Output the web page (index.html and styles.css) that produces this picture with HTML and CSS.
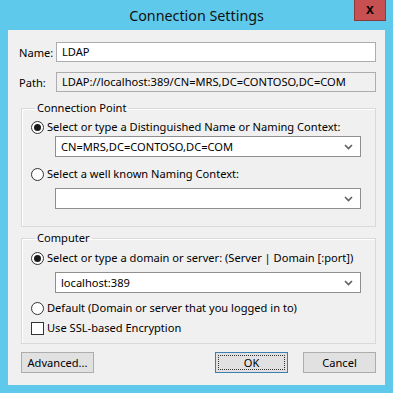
FILE: index.html
```html
<!DOCTYPE html>
<html lang="en">
<head>
  <meta charset="UTF-8">
  <title>Connection Settings</title>
  <link rel="stylesheet" href="styles.css">
</head>
<body>
  <div class="window">
    <div class="titlebar">
      <div class="title">Connection Settings</div>
      <div class="close-btn">x</div>
    </div>

    <div class="client">
      <div class="field-row">
        <label class="field-label">Name:</label>
        <div class="textbox">LDAP</div>
      </div>
      <div class="field-row path-row">
        <label class="field-label">Path:</label>
        <div class="textbox readonly">LDAP://localhost:389/CN=MRS,DC=CONTOSO,DC=COM</div>
      </div>

      <fieldset class="group first-group">
        <legend>Connection Point</legend>
        <div class="option">
          <span class="radio checked"></span>
          <span>Select or type a Distinguished Name or Naming Context:</span>
        </div>
        <div class="combo first-combo">
          <span class="combo-text">CN=MRS,DC=CONTOSO,DC=COM</span>
          <svg class="chevron" width="9" height="6" viewBox="0 0 9 6"><polyline points="1,1 4.5,4.5 8,1" fill="none" stroke="#606060" stroke-width="1.6"/></svg>
        </div>
        <div class="option option-spaced">
          <span class="radio"></span>
          <span>Select a well known Naming Context:</span>
        </div>
        <div class="combo second-combo">
          <span class="combo-text"></span>
          <svg class="chevron" width="9" height="6" viewBox="0 0 9 6"><polyline points="1,1 4.5,4.5 8,1" fill="none" stroke="#606060" stroke-width="1.6"/></svg>
        </div>
      </fieldset>

      <fieldset class="group second-group">
        <legend>Computer</legend>
        <div class="option">
          <span class="radio checked"></span>
          <span>Select or type a domain or server: (Server | Domain [:port])</span>
        </div>
        <div class="combo second-combo">
          <span class="combo-text">localhost:389</span>
          <svg class="chevron" width="9" height="6" viewBox="0 0 9 6"><polyline points="1,1 4.5,4.5 8,1" fill="none" stroke="#606060" stroke-width="1.6"/></svg>
        </div>
        <div class="option default-option">
          <span class="radio"></span>
          <span>Default (Domain or server that you logged in to)</span>
        </div>
        <div class="option ssl-option">
          <span class="checkbox"></span>
          <span>Use SSL-based Encryption</span>
        </div>
      </fieldset>

      <div class="button-row">
        <button class="btn">Advanced...</button>
        <div class="button-right">
          <button class="btn btn-default"><span class="focus-rect">OK</span></button>
          <button class="btn">Cancel</button>
        </div>
      </div>
    </div>
  </div>
</body>
</html>
```

FILE: styles.css
```css
* {
  box-sizing: border-box;
  margin: 0;
  padding: 0;
}

body {
  font-family: 'Noto Sans', 'Open Sans', sans-serif;
  font-size: 11.1px;
  color: #000;
  background-color: #5fc9ec;
  width: 393px;
  height: 393px;
  overflow: hidden;
}

.window {
  height: 393px;
  display: flex;
  flex-direction: column;
}

.titlebar {
  height: 30px;
  display: grid;
  grid-template-columns: 1fr auto 1fr;
  align-items: start;
}

.title {
  grid-column: 2;
  font-size: 14.3px;
  line-height: 15px;
  padding-top: 8px;
  color: #111;
}

.close-btn {
  grid-column: 3;
  justify-self: end;
  margin-right: 7px;
  width: 32px;
  height: 21px;
  background-color: #c75050;
  border: 1px solid #8f3a3a;
  border-top: none;
  color: #000;
  font-family: 'Liberation Sans', Arial, sans-serif;
  font-weight: bold;
  font-size: 14px;
  line-height: 18px;
  text-align: center;
}

.client {
  margin: 0 8px;
  height: 355px;
  background-color: #f0f0f0;
  padding: 12px 9px 0 11px;
}

.field-row {
  display: flex;
  align-items: center;
  height: 20px;
}

.path-row {
  margin-top: 10px;
}

.field-label {
  width: 37px;
}

.textbox {
  width: 320px;
  height: 20px;
  background: #fff;
  border: 1px solid #abadb3;
  padding-left: 5px;
  line-height: 18px;
  white-space: nowrap;
  overflow: hidden;
}

.textbox.readonly {
  background: #f0f0f0;
  border-color: #adadad;
}

.group {
  margin-left: 2px;
  border: 1px solid #d9d9d9;
  box-shadow: inset 1px 1px 0 #fff;
  padding: 0 13px 17px 9px;
  min-width: 0;
}

.group legend {
  margin-left: 4px;
  padding: 0 2px;
  line-height: 14px;
}

.first-group {
  margin-top: 9px;
  padding-top: 5px;
}

.second-group {
  margin-top: 4px;
  padding-top: 6px;
  padding-bottom: 8px;
}

.option {
  display: flex;
  align-items: center;
  gap: 3px;
  height: 14px;
  line-height: 14px;
  white-space: nowrap;
}

.option-spaced {
  margin-top: 10px;
}

.default-option {
  margin-top: 8px;
}

.ssl-option {
  margin-top: 6px;
}

.radio {
  width: 13px;
  height: 13px;
  border-radius: 50%;
  border: 1px solid #333;
  background: #fff;
  display: flex;
  align-items: center;
  justify-content: center;
  flex: none;
}

.radio.checked::after {
  content: '';
  width: 7px;
  height: 7px;
  border-radius: 50%;
  background: #1a1a1a;
}

.checkbox {
  width: 13px;
  height: 13px;
  border: 1px solid #333;
  background: #fff;
  flex: none;
}

.combo {
  margin-left: 24px;
  width: 306px;
  height: 21px;
  background: #fff;
  border: 1px solid #8f8f8f;
  display: flex;
  align-items: center;
  justify-content: space-between;
  padding: 0 7px 0 5px;
}

.first-combo {
  margin-top: 2px;
}

.second-combo {
  margin-top: 7px;
}

.button-row {
  margin-top: 8px;
  margin-left: 2px;
  display: flex;
  justify-content: space-between;
}

.button-right {
  display: flex;
  gap: 15px;
}

.btn {
  font-family: inherit;
  font-size: 11.1px;
  color: #000;
  width: 73px;
  height: 21px;
  background: #e1e1e1;
  border: 1px solid #adadad;
  display: flex;
  align-items: center;
  justify-content: center;
}

.btn-default {
  border-color: #3c7fb1;
  padding: 2px;
}

.focus-rect {
  width: 100%;
  height: 100%;
  border: 1px dotted #333;
  display: flex;
  align-items: center;
  justify-content: center;
}
```
